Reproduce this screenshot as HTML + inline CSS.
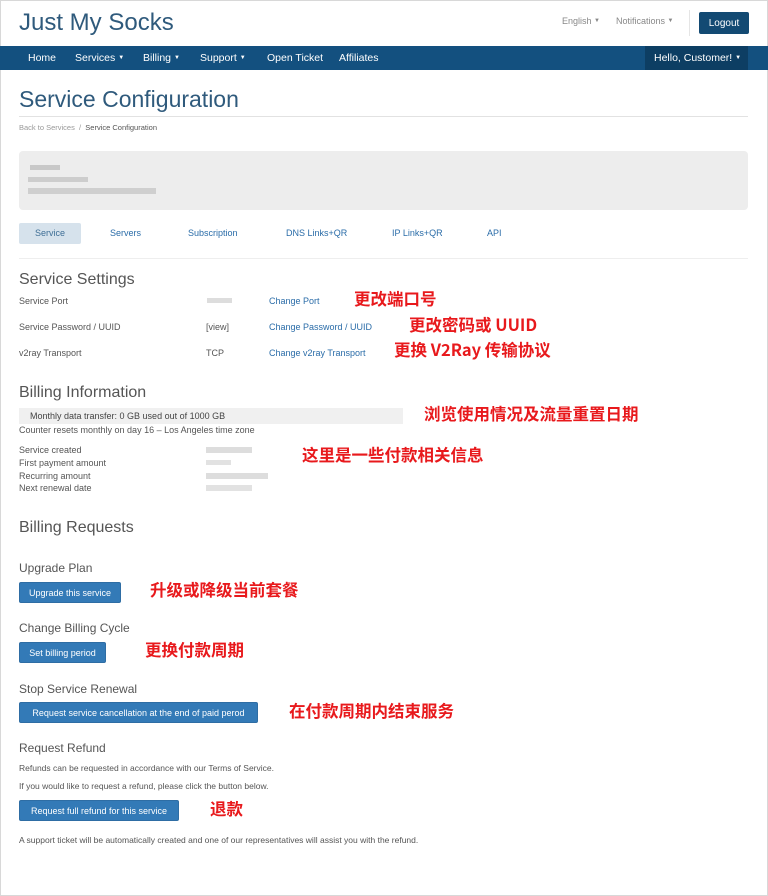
<!DOCTYPE html>
<html><head><meta charset="utf-8"><style>
*{margin:0;padding:0;box-sizing:border-box}
body{width:768px;height:896px;position:relative;background:#fff;font-family:"Liberation Sans","Noto Sans CJK SC",sans-serif;color:#444;overflow:hidden}
.frame{position:absolute;left:0;top:0;width:768px;height:896px;border:1px solid #d8d8d8}
.a{position:absolute;white-space:nowrap;line-height:1}
.s9{font-size:9px;color:#555}
.lnk{color:#2a6ca8}
.h{color:#2d5878;font-weight:normal}
.sub{font-size:16px;color:#555}
.red{color:#e8191c;font-weight:bold;font-size:16.5px;font-family:"Noto Sans CJK SC","Liberation Sans",sans-serif}
.btn{position:absolute;background:#337ab7;color:#fff;font-size:9px;border-radius:2px;display:flex;align-items:center;justify-content:center;border:1px solid #2e6da4}
.nav{position:absolute;left:0;top:46px;width:768px;height:24px;background:#13507f}
.nav .i{position:absolute;top:7px;font-size:10.5px;color:#fff;line-height:1;white-space:nowrap}
.car{font-size:6px;vertical-align:2px}
</style></head><body>
<div class="frame"></div>
<div class="a h" style="left:19px;top:11px;font-size:24px;color:#2f5a7c">Just My Socks</div>
<div class="a" style="left:562px;top:17px;font-size:9px;color:#888">English <span class="car">▼</span></div>
<div class="a" style="left:616px;top:17px;font-size:9px;color:#888">Notifications <span class="car">▼</span></div>
<div style="position:absolute;left:689px;top:10px;width:1px;height:26px;background:#e5e5e5"></div>
<div class="btn" style="left:699px;top:12px;width:50px;height:22px;background:#134a73;border-color:#134a73;font-size:10px">Logout</div>
<div class="nav">
<div style="position:absolute;left:645px;top:0;width:103px;height:24px;background:#0d3e63"></div>
<span class="i" style="left:28px">Home</span>
<span class="i" style="left:75px">Services <span class="car">▼</span></span>
<span class="i" style="left:143px">Billing <span class="car">▼</span></span>
<span class="i" style="left:200px">Support <span class="car">▼</span></span>
<span class="i" style="left:267px">Open Ticket</span>
<span class="i" style="left:339px">Affiliates</span>
<span class="i" style="left:654px">Hello, Customer! <span class="car">▼</span></span>
</div>
<div class="a h" style="left:19px;top:88px;font-size:23px;color:#2f5a7c">Service Configuration</div>
<div style="position:absolute;left:19px;top:116px;width:729px;height:1px;background:#e2e2e2"></div>
<div class="a" style="left:19px;top:124px;font-size:7.5px;color:#999">Back to Services &nbsp;/&nbsp; <span style="color:#555">Service Configuration</span></div>
<div style="position:absolute;left:19px;top:151px;width:729px;height:59px;background:#ededed;border-radius:4px"></div>
<div style="position:absolute;left:30px;top:165px;width:30px;height:5px;background:#c8c8c8"></div>
<div style="position:absolute;left:28px;top:177px;width:60px;height:5px;background:#cdcdcd"></div>
<div style="position:absolute;left:28px;top:188px;width:128px;height:6px;background:#cfcfcf"></div>
<div style="position:absolute;left:19px;top:223px;width:62px;height:21px;background:#d6e2ec;border-radius:2px"></div>
<div class="a s9" style="left:35px;top:229px;color:#3f6f96">Service</div>
<div class="a s9 lnk" style="left:110px;top:229px">Servers</div>
<div class="a s9 lnk" style="left:188px;top:229px">Subscription</div>
<div class="a s9 lnk" style="left:286px;top:229px">DNS Links+QR</div>
<div class="a s9 lnk" style="left:392px;top:229px">IP Links+QR</div>
<div class="a s9 lnk" style="left:487px;top:229px">API</div>
<div style="position:absolute;left:19px;top:258px;width:729px;height:1px;background:#eee"></div>
<div class="a sub" style="left:19px;top:272px">Service Settings</div>
<div class="a s9" style="left:19px;top:297px">Service Port</div>
<div style="position:absolute;left:207px;top:298px;width:25px;height:5px;background:#ddd"></div>
<div class="a s9 lnk" style="left:269px;top:297px">Change Port</div>
<div class="a red" style="left:354px;top:290px">更改端口号</div>
<div class="a s9" style="left:19px;top:323px">Service Password / UUID</div>
<div class="a s9" style="left:206px;top:323px">[view]</div>
<div class="a s9 lnk" style="left:269px;top:323px">Change Password / UUID</div>
<div class="a red" style="left:409px;top:316px">更改密码或 UUID</div>
<div class="a s9" style="left:19px;top:349px">v2ray Transport</div>
<div class="a s9" style="left:206px;top:349px">TCP</div>
<div class="a s9 lnk" style="left:269px;top:349px">Change v2ray Transport</div>
<div class="a red" style="left:394px;top:341px">更换 V2Ray 传输协议</div>
<div class="a sub" style="left:19px;top:385px">Billing Information</div>
<div style="position:absolute;left:19px;top:408px;width:384px;height:16px;background:#f0f0f0"></div>
<div class="a s9" style="left:30px;top:412px;color:#444">Monthly data transfer: 0 GB used out of 1000 GB</div>
<div class="a s9" style="left:19px;top:426px">Counter resets monthly on day 16 – Los Angeles time zone</div>
<div class="a red" style="left:424px;top:405px">浏览使用情况及流量重置日期</div>
<div class="a s9" style="left:19px;top:446px">Service created</div>
<div class="a s9" style="left:19px;top:459px">First payment amount</div>
<div class="a s9" style="left:19px;top:472px">Recurring amount</div>
<div class="a s9" style="left:19px;top:484px">Next renewal date</div>
<div style="position:absolute;left:206px;top:447px;width:46px;height:6px;background:#ddd"></div>
<div style="position:absolute;left:206px;top:460px;width:25px;height:5px;background:#e2e2e2"></div>
<div style="position:absolute;left:206px;top:473px;width:62px;height:6px;background:#ddd"></div>
<div style="position:absolute;left:206px;top:485px;width:46px;height:6px;background:#e2e2e2"></div>
<div class="a red" style="left:302px;top:446px">这里是一些付款相关信息</div>
<div class="a sub" style="left:19px;top:520px">Billing Requests</div>
<div class="a" style="left:19px;top:562px;font-size:12px;color:#555">Upgrade Plan</div>
<div class="btn" style="left:19px;top:582px;width:102px;height:21px">Upgrade this service</div>
<div class="a red" style="left:150px;top:581px">升级或降级当前套餐</div>
<div class="a" style="left:19px;top:622px;font-size:12px;color:#555">Change Billing Cycle</div>
<div class="btn" style="left:19px;top:642px;width:87px;height:21px">Set billing period</div>
<div class="a red" style="left:145px;top:641px">更换付款周期</div>
<div class="a" style="left:19px;top:683px;font-size:12px;color:#555">Stop Service Renewal</div>
<div class="btn" style="left:19px;top:702px;width:239px;height:21px">Request service cancellation at the end of paid perod</div>
<div class="a red" style="left:289px;top:702px">在付款周期内结束服务</div>
<div class="a" style="left:19px;top:742px;font-size:12px;color:#555">Request Refund</div>
<div class="a s9" style="left:19px;top:764px;font-size:8.5px">Refunds can be requested in accordance with our Terms of Service.</div>
<div class="a s9" style="left:19px;top:782px;font-size:8.5px">If you would like to request a refund, please click the button below.</div>
<div class="btn" style="left:19px;top:800px;width:160px;height:21px">Request full refund for this service</div>
<div class="a red" style="left:210px;top:800px">退款</div>
<div class="a s9" style="left:19px;top:836px;font-size:8.5px">A support ticket will be automatically created and one of our representatives will assist you with the refund.</div>
</body></html>
